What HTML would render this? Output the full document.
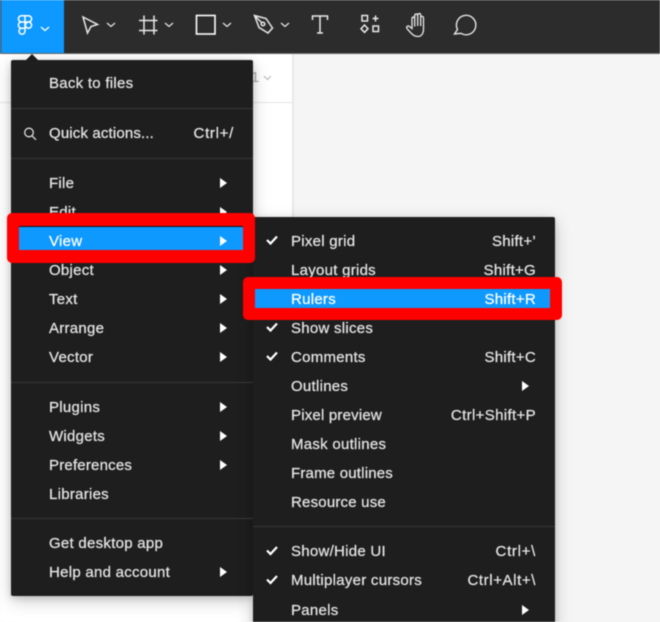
<!DOCTYPE html>
<html><head><meta charset="utf-8"><style>
html,body{margin:0;padding:0}
body{width:660px;height:622px;overflow:hidden;position:relative;background:#f5f5f5;font-family:"Liberation Sans",sans-serif}
#root{position:absolute;left:0;top:0;width:660px;height:622px;overflow:hidden;filter:blur(.45px)}
.a{position:absolute}
.t{position:absolute;font-size:15px;line-height:20px;height:20px;color:#e4e4e4;white-space:nowrap;letter-spacing:.27px;-webkit-text-stroke:.25px #e4e4e4}
.r{text-align:right}
.c{letter-spacing:.7px}
.sep{position:absolute;height:1px;background:#383838}
.tri{position:absolute;width:0;height:0;border-left:7px solid #fff;border-top:5px solid transparent;border-bottom:5px solid transparent}
svg{position:absolute;overflow:visible}
</style></head><body><div id="root">
<div class="a" style="left:0;top:54px;width:292px;height:568px;background:#fff;border-right:2px solid #e8e8e8"></div>
<div class="a" style="left:0;top:102px;width:292px;height:1px;background:#e6e6e6"></div>
<div class="t" style="left:251px;top:68px;color:#aaa;-webkit-text-stroke:0">1</div>
<svg style="left:0;top:0" width="660" height="622" fill="none"><path d="M264 76l3.500 3.500 3.500-3.500" stroke="#bbb" stroke-width="1.200"/></svg>

<div class="a" style="left:0;top:0;width:660px;height:53px;background:#2c2c2c;border-bottom:1px solid #666"></div>
<div class="a" style="left:1px;top:0;width:63px;height:53px;background:#0d99ff"></div>
<svg style="left:0;top:0" width="660" height="54" fill="none" stroke="#e8e8e8" stroke-width="1.400">
<g stroke="#fff" stroke-width="1.500"><path d="M25 15.800h-3.500a3.100 3.100 0 0 0 0 6.200H25zM25 15.800h3.500a3.100 3.100 0 0 1 0 6.200H25zM25 22h-3.500a3.100 3.100 0 0 0 0 6.200H25zM25 28.200h-3.500a3 3 0 1 0 3.500 3z"/><circle cx="28.500" cy="25.100" r="3.100"/></g>
<path d="M41 27l4 3.500 4-3.500" stroke="#fff" stroke-width="1.300"/>
<path d="M83 17l14.500 7.500-6.500 2-3.500 6.500z" stroke-width="1.500"/>
<path d="M107 23l4 3.500 4-3.500M165 23l4 3.500 4-3.500M223 23l4 3.500 4-3.500M281 23l4 3.500 4-3.500" stroke-width="1.200"/>
<path d="M144 15.500v19M154 15.500v19M139 20.500h18.500M139 30.500h18.500" stroke-width="1.500"/>
<rect x="196.500" y="15.500" width="18.500" height="18.500" stroke="#fff" stroke-width="1.600"/>
<path d="M254.500 15.500l11.500 3 6.500 9.500-4.500 5-9-5.500z" stroke-width="1.500"/><circle cx="263" cy="24" r="1.800" stroke-width="1.500"/><path d="M255 16l6.500 6.500"/>
<path d="M312.500 20v-4h15v4M320 16v17M317 33h6" stroke-width="1.500"/>
<path d="M362 15.500h5.500v5.500H362zM372.500 18.500h6M375.500 15.500v6M364.500 25l3.500 3.700-3.500 3.700-3.500-3.700zM373 26h5.500v5.500H373z" stroke-width="1.500"/>
<path d="M414 35.500c-2.500-1.500-4.500-4-7-7-1-1.500.5-3.300 2-2.300l3 2.300V18.500c0-1.900 2.700-1.900 2.700 0V15.500c0-1.900 3-1.900 3 0v-.5c0-1.900 3-1.900 3 0v2.500c0-1.600 2.800-1.600 2.800.5V29c0 5-2.500 7.500-5.500 7.500-1.500 0-2.700-.3-4-1zM414.700 18.500v8M417.700 15v11M420.700 15v11M423.500 18v8" stroke-width="1.300"/>
<path d="M454.500 34l3-4.500A9.700 9.700 0 1 1 461 33.300z"/>
</svg>

<div class="a" style="left:26px;top:54px;width:0;height:0;border-left:6px solid transparent;border-right:6px solid transparent;border-bottom:6px solid #1e1e1e"></div>
<div class="a" style="left:11px;top:60px;width:242px;height:536px;background:#1e1e1e;border-radius:2px;box-shadow:0 5px 17px rgba(0,0,0,.2),0 2px 7px rgba(0,0,0,.15)"></div>
<div class="a" style="left:253px;top:217px;width:302px;height:420px;background:#1e1e1e;border-radius:2px;box-shadow:0 5px 17px rgba(0,0,0,.2),0 2px 7px rgba(0,0,0,.15)"></div>

<div class="sep" style="left:11px;top:108px;width:242px"></div>
<div class="sep" style="left:11px;top:158px;width:242px"></div>
<div class="sep" style="left:11px;top:382px;width:242px"></div>
<div class="sep" style="left:11px;top:518px;width:242px"></div>
<div class="sep" style="left:253px;top:526px;width:302px"></div>

<svg style="left:0;top:0" width="660" height="622" fill="none" stroke="#ddd" stroke-width="1.300"><circle cx="29" cy="132.500" r="4.300"/><path d="M32 135.800l4 4"/></svg>

<div class="t" style="left:49px;top:74px">Back to files</div>
<div class="t" style="left:49px;top:124px;letter-spacing:.15px">Quick actions...</div>
<div class="t r c" style="right:426px;top:124px">Ctrl+/</div>
<div class="t" style="left:49px;top:174px">File</div>
<div class="t" style="left:49px;top:203px">Edit</div>
<div class="t" style="left:49px;top:261px">Object</div>
<div class="t" style="left:49px;top:290px">Text</div>
<div class="t" style="left:49px;top:319px">Arrange</div>
<div class="t" style="left:49px;top:348px">Vector</div>
<div class="t" style="left:49px;top:398px">Plugins</div>
<div class="t" style="left:49px;top:427px">Widgets</div>
<div class="t" style="left:49px;top:456px;letter-spacing:.2px">Preferences</div>
<div class="t" style="left:49px;top:485px">Libraries</div>
<div class="t" style="left:49px;top:534px">Get desktop app</div>
<div class="t" style="left:49px;top:563px">Help and account</div>
<div class="tri" style="left:220px;top:178px"></div>
<div class="tri" style="left:220px;top:207px"></div>
<div class="tri" style="left:220px;top:265px"></div>
<div class="tri" style="left:220px;top:294px"></div>
<div class="tri" style="left:220px;top:323px"></div>
<div class="tri" style="left:220px;top:352px"></div>
<div class="tri" style="left:220px;top:402px"></div>
<div class="tri" style="left:220px;top:431px"></div>
<div class="tri" style="left:220px;top:460px"></div>
<div class="tri" style="left:220px;top:567px"></div>

<div class="t" style="left:291px;top:232px">Pixel grid</div><div class="t r" style="right:124px;top:232px">Shift+’</div>
<div class="t" style="left:291px;top:261px">Layout grids</div><div class="t r" style="right:124px;top:261px">Shift+G</div>
<div class="t" style="left:291px;top:319px">Show slices</div>
<div class="t" style="left:291px;top:348px">Comments</div><div class="t r" style="right:124px;top:348px">Shift+C</div>
<div class="t" style="left:291px;top:377px">Outlines</div>
<div class="t" style="left:291px;top:406px;letter-spacing:.2px">Pixel preview</div><div class="t r" style="right:124px;top:406px;letter-spacing:.35px">Ctrl+Shift+P</div>
<div class="t" style="left:291px;top:435px">Mask outlines</div>
<div class="t" style="left:291px;top:464px;letter-spacing:.2px">Frame outlines</div>
<div class="t" style="left:291px;top:493px;letter-spacing:.2px">Resource use</div>
<div class="t" style="left:291px;top:542px">Show/Hide UI</div><div class="t r c" style="right:124px;top:542px">Ctrl+\</div>
<div class="t" style="left:291px;top:571px">Multiplayer cursors</div><div class="t r" style="right:124px;top:571px;letter-spacing:.6px">Ctrl+Alt+\</div>
<div class="t" style="left:291px;top:601px">Panels</div>
<div class="tri" style="left:522px;top:381px"></div>
<div class="tri" style="left:522px;top:605px"></div>
<svg style="left:0;top:0" width="660" height="622" fill="none" stroke="#fff" stroke-width="2.200"><path d="M267 240l3.500 3.500 6.500-7M267 327l3.500 3.500 6.500-7M267 356l3.500 3.500 6.500-7M267 550.500l3.500 3.500 6.500-7M267 579.500l3.500 3.500 6.500-7"/></svg>

<div class="a" style="left:7px;top:213px;width:248px;height:50px;background:#f00;border-radius:5px"></div>
<div class="a" style="left:19px;top:226px;width:224px;height:1px;background:#111"></div>
<div class="a" style="left:19px;top:227px;width:224px;height:23px;background:#0d99ff"></div>
<div class="t" style="left:49px;top:232px;color:#fff;-webkit-text-stroke:.25px #fff">View</div>
<div class="tri" style="left:220px;top:236px"></div>
<div class="a" style="left:243px;top:277px;width:319px;height:43px;background:#f00;border-radius:5px"></div>
<div class="a" style="left:255px;top:289px;width:295px;height:19px;background:#0d99ff"></div>
<div class="t" style="left:291px;top:290px;color:#fff;-webkit-text-stroke:.25px #fff">Rulers</div>
<div class="t r" style="right:124px;top:290px;color:#fff;-webkit-text-stroke:.25px #fff">Shift+R</div>
</div></body></html>
